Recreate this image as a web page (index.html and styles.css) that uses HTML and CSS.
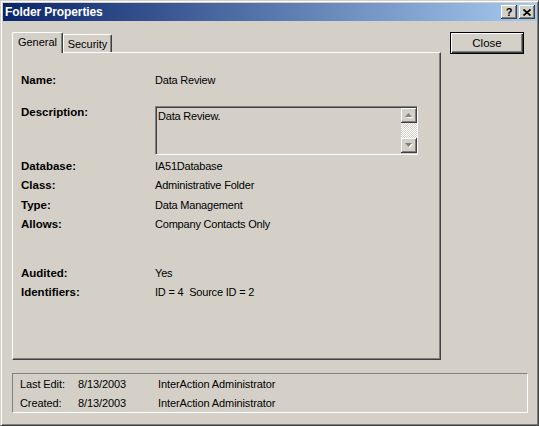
FILE: index.html
```
<!DOCTYPE html>
<html lang="en">

<head>
    <meta charset="UTF-8">
    <meta name="viewport" content="width=device-width, initial-scale=1.0">
    <title>Folder Properties</title>

    <link rel="stylesheet" href="styles.css">
</head>

<body>
    <div class="window">
        <div class="titlebar">
            <span class="title">Folder Properties</span>
            <div class="caption-btns">
                <div class="cap-btn help">?</div>
                <div class="cap-btn">
                    <svg width="8" height="7" viewBox="0 0 8 7">
                        <path d="M0.5 0.5L7.5 6.5M7.5 0.5L0.5 6.5" stroke="#000" stroke-width="1.7" fill="none" />
                    </svg>
                </div>
            </div>
        </div>

        <div class="client">
            <div class="top-row">
                <div class="tabs-area">
                    <div class="tabstrip">
                        <div class="tab selected">General</div>
                        <div class="tab">Security</div>
                    </div>
                    <div class="panel">
                        <div class="row">
                            <span class="label">Name:</span><span class="value">Data Review</span>
                        </div>
                        <div class="row desc-row">
                            <span class="label">Description:</span>
                            <div class="memo">
                                <div class="memo-text">Data Review.</div>
                                <div class="scrollbar">
                                    <div class="scroll-btn">
                                        <svg width="8" height="5" viewBox="0 0 8 5">
                                            <polygon points="4.5,1 8,5 1,5" fill="#fff" />
                                            <polygon points="3.5,0 7,4 0,4" fill="#808080" />
                                        </svg>
                                    </div>
                                    <div class="scroll-track"></div>
                                    <div class="scroll-btn">
                                        <svg width="8" height="5" viewBox="0 0 8 5">
                                            <polygon points="1,1 8,1 4.5,5" fill="#fff" />
                                            <polygon points="0,0 7,0 3.5,4" fill="#808080" />
                                        </svg>
                                    </div>
                                </div>
                            </div>
                        </div>
                        <div class="row after-desc">
                            <span class="label">Database:</span><span class="value">IA51Database</span>
                        </div>
                        <div class="row">
                            <span class="label">Class:</span><span class="value">Administrative Folder</span>
                        </div>
                        <div class="row">
                            <span class="label">Type:</span><span class="value">Data Management</span>
                        </div>
                        <div class="row">
                            <span class="label">Allows:</span><span class="value">Company Contacts Only</span>
                        </div>
                        <div class="row spaced">
                            <span class="label">Audited:</span><span class="value">Yes</span>
                        </div>
                        <div class="row">
                            <span class="label">Identifiers:</span><span class="value">ID = 4&nbsp; Source ID = 2</span>
                        </div>
                    </div>
                </div>
                <div class="btn default">Close</div>
            </div>

            <div class="info-frame">
                <div class="info-row">
                    <span class="info-label">Last Edit:</span><span class="info-date">8/13/2003</span><span>InterAction Administrator</span>
                </div>
                <div class="info-row">
                    <span class="info-label">Created:</span><span class="info-date">8/13/2003</span><span>InterAction Administrator</span>
                </div>
            </div>
        </div>
    </div>
</body>

</html>
```

FILE: styles.css
```
* {
    box-sizing: border-box;
}

body {
    margin: 0;
    background-color: #d4d0c8;
    font-family: "Liberation Sans", Arial, sans-serif;
    font-size: 11px;
    color: #000;
}

.window {
    width: 539px;
    height: 426px;
    background-color: #d4d0c8;
    border: 1px solid;
    border-color: #d4d0c8 #404040 #404040 #d4d0c8;
    box-shadow: inset 1px 1px #fff, inset -1px -1px #808080;
    padding: 2px 1px 1px 2px;
}

.titlebar {
    height: 18px;
    background: linear-gradient(to right, #0a246a, #a6caf0);
    display: flex;
    align-items: center;
    justify-content: space-between;
    padding: 0 2px 0 2px;
}

.title {
    color: #fff;
    font-weight: bold;
    font-size: 12px;
    letter-spacing: -0.1px;
}

.caption-btns {
    display: flex;
    gap: 2px;
}

.cap-btn {
    width: 16px;
    height: 14px;
    background-color: #d4d0c8;
    box-shadow: inset -1px -1px #404040, inset 1px 1px #fff, inset -2px -2px #808080;
    display: flex;
    align-items: center;
    justify-content: center;
}

.cap-btn.help {
    font-weight: bold;
    font-size: 11px;
    line-height: 14px;
}

.client {
    padding: 11px 9px 0 9px;
}

.top-row {
    display: flex;
    align-items: flex-start;
}

.tabs-area {
    width: 429px;
}

.tabstrip {
    height: 20px;
    display: flex;
    align-items: flex-end;
}

.tab {
    height: 18px;
    width: 49px;
    border-top: 1px solid #fff;
    border-left: 1px solid #fff;
    border-right: 1px solid #404040;
    box-shadow: inset -1px 0 #808080;
    border-radius: 2px 2px 0 0;
    display: flex;
    align-items: center;
    justify-content: center;
    padding-top: 1px;
}

.tab.selected {
    position: relative;
    z-index: 1;
    width: 51px;
    height: 21px;
    margin-bottom: -1px;
    background-color: #d4d0c8;
    padding-top: 0;
    padding-bottom: 2px;
}

.panel {
    height: 308px;
    border-top: 1px solid #fff;
    border-left: 1px solid #fff;
    border-right: 1px solid #404040;
    border-bottom: 1px solid #404040;
    box-shadow: inset -1px -1px #808080;
    padding: 18px 0 0 8px;
}

.row {
    display: flex;
    line-height: 19.5px;
}

.label {
    width: 134px;
    flex-shrink: 0;
    font-weight: bold;
    font-size: 11.5px;
}

.value {
    letter-spacing: -0.2px;
}

.desc-row {
    margin-top: 12px;
    align-items: flex-start;
}

.after-desc {
    margin-top: 2px;
}

.spaced {
    margin-top: 29px;
}

.memo {
    margin-top: 3px;
    width: 263px;
    height: 49px;
    border: 1px solid;
    border-color: #808080 #fff #fff #808080;
    box-shadow: inset 1px 1px #404040;
    padding: 1px 0 1px 1px;
    display: flex;
}

.memo-text {
    flex: 1;
    line-height: 14px;
    padding: 1px 0 0 1px;
    letter-spacing: -0.2px;
}

.scrollbar {
    width: 16px;
    display: flex;
    flex-direction: column;
}

.scroll-btn {
    height: 15px;
    background-color: #d4d0c8;
    box-shadow: inset -1px -1px #404040, inset 1px 1px #fff, inset -2px -2px #808080;
    display: flex;
    align-items: center;
    justify-content: center;
}

.scroll-track {
    flex: 1;
    background: repeating-conic-gradient(#d4d0c8 0 25%, #fff 0 50%) 0 0 / 2px 2px;
}

.btn {
    width: 74px;
    height: 22px;
    background-color: #d4d0c8;
    display: flex;
    align-items: center;
    justify-content: center;
    font-size: 11.5px;
}

.btn.default {
    margin-left: 9px;
    border: 1px solid #000;
    box-shadow: inset 1px 1px #fff, inset -1px -1px #404040, inset -2px -2px #808080;
}

.info-frame {
    margin-top: 13px;
    height: 40px;
    border: 1px solid;
    border-color: #808080 #fff #fff #808080;
    padding: 1px 0 0 7px;
}

.info-row {
    display: flex;
    line-height: 19px;
    letter-spacing: -0.1px;
}

.info-label {
    width: 58px;
}

.info-date {
    width: 80px;
}
```
